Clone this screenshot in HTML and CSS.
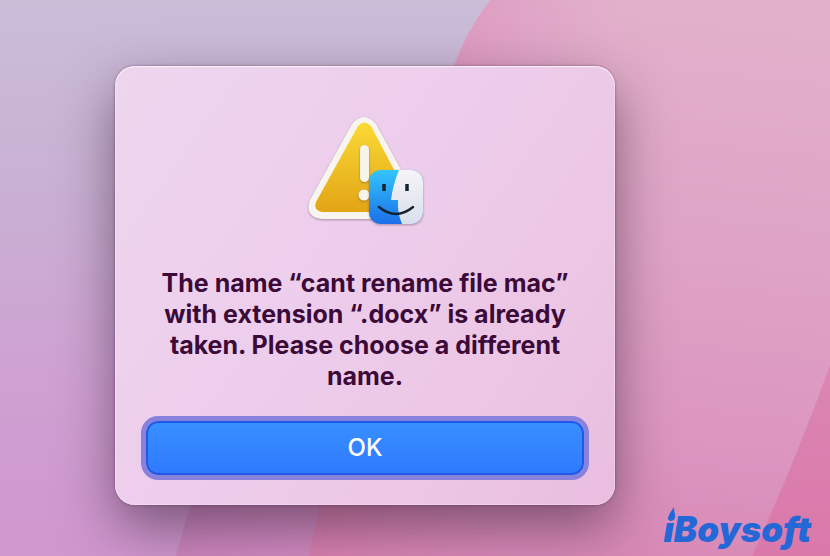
FILE: index.html
```html
<!DOCTYPE html>
<html lang="en">
  <head>
    <meta charset="UTF-8" />
    <meta name="viewport" content="width=device-width, initial-scale=1.0" />
    <title>Name already taken</title>
    <link rel="stylesheet" href="styles.css">
  </head>
  <body>
    <svg class="wallpaper" viewBox="0 0 830 556" preserveAspectRatio="none" aria-hidden="true">
      <defs>
        <linearGradient id="lilac" x1="0" y1="0" x2="0" y2="1">
          <stop offset="0" stop-color="#cabdd8" />
          <stop offset="0.35" stop-color="#c9b0d3" />
          <stop offset="0.7" stop-color="#cfa0d2" />
          <stop offset="1" stop-color="#d096ce" />
        </linearGradient>
        <linearGradient id="band" x1="0" y1="0" x2="1" y2="0">
          <stop offset="0" stop-color="#cd86bf" />
          <stop offset="1" stop-color="#d48fc3" />
        </linearGradient>
        <linearGradient id="pink" x1="0.5" y1="0" x2="0.4" y2="1">
          <stop offset="0" stop-color="#e2b0cb" />
          <stop offset="0.45" stop-color="#dea2c5" />
          <stop offset="0.8" stop-color="#db94bf" />
          <stop offset="1" stop-color="#d988b6" />
        </linearGradient>
        <linearGradient id="edge" x1="0" y1="0" x2="1" y2="0">
          <stop offset="0" stop-color="#da80b0" />
          <stop offset="0.6" stop-color="#da93c2" stop-opacity="0" />
        </linearGradient>
        <linearGradient id="rose" x1="0" y1="0" x2="0" y2="1">
          <stop offset="0" stop-color="#db86b3" />
          <stop offset="1" stop-color="#da78aa" />
        </linearGradient>
      </defs>
      <rect width="830" height="556" fill="url(#lilac)" />
      <path d="M260 300 Q210 430 176 556 H400 V300Z" fill="url(#band)" />
      <path d="M490 0 Q466 32 454 66 Q360 300 309 556 H830 V0Z" fill="url(#pink)" />
      <path d="M490 0 Q466 32 454 66 Q360 300 309 556 H830 V0Z" fill="url(#edge)" />
      <path d="M830 365 Q796 460 752 556 H830Z" fill="url(#rose)" />
    </svg>

    <main class="desktop">
      <section class="dialog" role="alertdialog" aria-labelledby="message">
        <svg class="alert-icon" width="124" height="120" viewBox="0 0 124 120" aria-hidden="true">
          <defs>
            <linearGradient id="yellow" x1="0" y1="0" x2="0" y2="1">
              <stop offset="0" stop-color="#f9da35" />
              <stop offset="1" stop-color="#e3a416" />
            </linearGradient>
            <linearGradient id="blue" x1="0" y1="0" x2="0" y2="1">
              <stop offset="0" stop-color="#33c5fa" />
              <stop offset="1" stop-color="#1c6fe9" />
            </linearGradient>
            <linearGradient id="white" x1="0" y1="0" x2="0" y2="1">
              <stop offset="0" stop-color="#f6f4f7" />
              <stop offset="1" stop-color="#d9dfeb" />
            </linearGradient>
            <clipPath id="face">
              <rect x="66" y="57" width="54" height="54" rx="12" />
            </clipPath>
          </defs>
          <g class="icon-shadow">
            <path d="M49 11 Q61 -3 73 11 L114 86 Q120 104 103 106 H19 Q1 104 7 87Z" fill="#f7f5ee" />
            <path d="M55 13 Q61 6 68 13 L108 89 Q111 98 103 99 H19 Q10 97 13 89Z" fill="url(#yellow)" />
          </g>
          <g class="icon-shadow" fill="#f7f5ea">
            <rect x="57" y="32" width="9" height="37" rx="4.500" />
            <circle cx="61" cy="82" r="5.500" />
          </g>
          <g class="icon-shadow">
            <g clip-path="url(#face)">
              <rect x="66" y="57" width="54" height="54" fill="url(#blue)" />
              <path d="M96 57 Q90 71 88 87 H95 Q94 99 99 111 H120 V57Z" fill="url(#white)" />
            </g>
          </g>
          <path d="M76 94 Q93 108 110 94" fill="none" stroke="#14232f" stroke-width="2.500" stroke-linecap="round" />
          <path d="M81 71 V78 M104 71 V78" fill="none" stroke="#14232f" stroke-width="3.500" />
        </svg>
        <p class="message" id="message">The name “cant rename file mac” with extension “.docx” is already taken. Please choose a different name.</p>
        <button class="ok" type="button">OK</button>
      </section>
    </main>

    <div class="watermark">
      <svg class="flame" width="8" height="14" viewBox="0 0 8 14" aria-hidden="true">
        <path d="M6 0 Q4 3 2 6 Q0 9 1 13 H5 Q8 10 7 7 Q6 4 6 0Z" fill="#2468d8" />
      </svg>
      iBoysoft
    </div>
  </body>
</html>
```

FILE: styles.css
```css
* {
  box-sizing: border-box;
}
body {
  position: relative;
  min-height: 100vh;
  margin: 0;
  overflow-x: hidden;
  background: #cfa0d2;
  font-family: Inter, "Liberation Sans", sans-serif;
}
.wallpaper {
  position: absolute;
  inset: 0;
  width: 100%;
  height: 100%;
}
.desktop {
  position: relative;
  padding: 66px 215px 50px 115px;
}
.dialog {
  display: flex;
  flex-direction: column;
  align-items: center;
  padding: 47px 31px 30px;
  border-radius: 20px;
  background: linear-gradient(125deg, #eed6ee 0%, #edcdec 45%, #ecc6e4 75%, #e9bde0 100%);
  box-shadow:
    inset 0 1px 1px rgba(255, 255, 255, 0.6),
    inset 0 0 1px 1px rgba(255, 255, 255, 0.25),
    0 0 2px 1px rgba(70, 30, 70, 0.25),
    0 22px 54px rgba(50, 30, 50, 0.55);
}
.alert-icon {
  display: block;
}
.icon-shadow {
  filter: drop-shadow(0 1px 1px rgba(70, 40, 60, 0.4));
}
.message {
  margin: 35px 0 29px;
  color: #3b0a38;
  font-size: 25px;
  font-weight: 700;
  line-height: 31px;
  text-align: center;
}
.ok {
  width: 100%;
  height: 54px;
  padding: 0 0 2px;
  border: 2px solid #2058e8;
  border-radius: 12px;
  background: linear-gradient(#388fff, #2f7aff);
  box-shadow: 0 0 0 5px #8982dd;
  color: #fff;
  font-family: inherit;
  font-size: 24px;
  font-weight: 500;
  cursor: pointer;
}
.watermark {
  position: absolute;
  right: 19px;
  bottom: 5px;
  color: #2468d8;
  font-size: 35px;
  font-style: italic;
  font-weight: 900;
  line-height: 44px;
}
.flame {
  position: absolute;
  left: 5px;
  top: 0;
}
```
